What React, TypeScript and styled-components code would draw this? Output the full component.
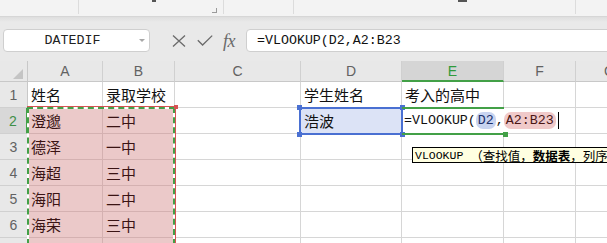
import React from "react";
import styled, { createGlobalStyle } from "styled-components";

const GlobalStyle = createGlobalStyle`
  html, body {
    margin: 0;
    padding: 0;
    background: #fff;
    overflow: hidden;
  }
  body {
    font-family: "Noto Sans CJK SC", "Noto Sans", sans-serif;
  }
`;

const GREEN = "#43a047";
const MONO = `"Liberation Mono", "DejaVu Sans Mono", monospace`;
const CJK = `"Noto Sans CJK SC", "Noto Sans", sans-serif`;

const Page = styled.div`
  width: 607px;
  height: 243px;
  overflow: hidden;
  display: flex;
  flex-direction: column;
`;

/* ---------- ribbon remnant ---------- */
const Ribbon = styled.div`
  height: 17px;
  flex: none;
  display: flex;
  background: #f3f3f3;
  border-bottom: 1px solid #d6d6d6;
  box-sizing: border-box;
`;

const RibbonGroup = styled.div<{ $w?: number }>`
  display: flex;
  align-items: flex-start;
  width: ${(p) => (p.$w ? `${p.$w}px` : "auto")};
  flex: ${(p) => (p.$w ? "none" : "1")};
  height: 14px;
  box-sizing: border-box;
  border-right: ${(p) => (p.$w ? "1px solid #dcdcdc" : "none")};
`;

const RibbonTick = styled.span<{ $left: number; $w: number }>`
  margin-left: ${(p) => p.$left}px;
  width: ${(p) => p.$w}px;
  height: 2px;
  background: #555;
`;

const Launcher = styled.span<{ $left: number }>`
  align-self: flex-end;
  margin-left: ${(p) => p.$left}px;
  margin-bottom: 1px;
  width: 4px;
  height: 4px;
  border-right: 1px solid #9a9a9a;
  border-bottom: 1px solid #9a9a9a;
`;

/* ---------- formula bar ---------- */
const FormulaArea = styled.div`
  height: 44px;
  flex: none;
  box-sizing: border-box;
  background: linear-gradient(#dedede, #e9e9e9 5px, #e9e9e9);
  padding: 12px 0 9px 3px;
  display: flex;
  align-items: stretch;
`;

const NameBox = styled.div`
  width: 147px;
  flex: none;
  box-sizing: border-box;
  background: #fff;
  border: 1px solid #cfcfcf;
  border-radius: 4px;
  display: flex;
  align-items: center;
  font-family: ${MONO};
  font-size: 13.3px;
  color: #222;
`;

const NameText = styled.span`
  flex: 1;
  text-align: center;
  padding-left: 2px;
`;

const DropArrow = styled.span`
  width: 0;
  height: 0;
  border-left: 3px solid transparent;
  border-right: 3px solid transparent;
  border-top: 3px solid #a8a8a8;
  margin-right: 4px;
`;

const Tools = styled.div`
  display: flex;
  align-items: center;
  gap: 11px;
  margin-left: 22px;
  color: #6a6a6a;
`;

const Fx = styled.span`
  font-family: "Liberation Serif", serif;
  font-style: italic;
  font-size: 18px;
  color: #6a6a6a;
  line-height: 1;
  margin-left: -1px;
  letter-spacing: -0.5px;
`;

const FormulaInput = styled.div`
  flex: 1;
  margin-left: 11px;
  margin-right: -8px;
  box-sizing: border-box;
  background: #fff;
  border: 1px solid #cfcfcf;
  border-radius: 4px;
  padding-left: 10px;
  display: flex;
  align-items: center;
  font-family: ${MONO};
  font-size: 13.3px;
  color: #111;
`;

/* ---------- sheet ---------- */
const Grid = styled.div`
  position: relative;
  display: grid;
  grid-template-columns: 28px 75px 72px 126px 101px 102px 72px 68px;
  grid-template-rows: 21px repeat(7, 26px);
`;

const Corner = styled.div`
  box-sizing: border-box;
  background: #e8e8e8;
  border-right: 1px solid #c8c8c8;
  border-bottom: 1px solid #c8c8c8;
  display: flex;
  justify-content: flex-end;
  align-items: flex-end;
  padding: 0 4px 2px 0;
`;

const CornerMark = styled.span`
  width: 0;
  height: 0;
  border-left: 10px solid transparent;
  border-bottom: 10px solid #c4c4c4;
`;

const ColHeader = styled.div<{ $active?: boolean }>`
  box-sizing: border-box;
  display: flex;
  align-items: center;
  justify-content: center;
  font-family: "Liberation Sans", Arial, sans-serif;
  font-size: 14px;
  color: ${(p) => (p.$active ? "#2f9a3a" : "#626262")};
  background: ${(p) => (p.$active ? "#d5d5d5" : "#e8e8e8")};
  border-right: 1px solid #d0d0d0;
  border-bottom: ${(p) => (p.$active ? `2px solid ${GREEN}` : "1px solid #c8c8c8")};
`;

const RowHeader = styled.div<{ $active?: boolean }>`
  box-sizing: border-box;
  display: flex;
  align-items: center;
  justify-content: center;
  font-family: "Liberation Sans", Arial, sans-serif;
  font-size: 14px;
  color: ${(p) => (p.$active ? "#3f8f48" : "#626262")};
  background: ${(p) => (p.$active ? "#d8d8d8" : "#e8e8e8")};
  border-right: ${(p) => (p.$active ? `2px solid ${GREEN}` : "1px solid #c8c8c8")};
  border-bottom: 1px solid #d0d0d0;
`;

type Fill = "pink" | "blue" | undefined;

const lineColor = (f: Fill) => (f === "pink" ? "#d4b1b1" : "#d6d6d6");

const Cell = styled.div<{ $fill?: Fill; $overflow?: boolean }>`
  box-sizing: border-box;
  display: flex;
  align-items: center;
  padding-left: ${(p) => (p.$overflow ? "2px" : "3px")};
  white-space: nowrap;
  font-family: ${CJK};
  font-size: 15px;
  color: ${(p) => (p.$fill === "pink" ? "#3a1414" : "#111")};
  background: ${(p) =>
    p.$fill === "pink" ? "#ebc9c9" : p.$fill === "blue" ? "#dce3f6" : "#fff"};
  border-bottom: 1px solid ${(p) => lineColor(p.$fill)};
  border-right: ${(p) => (p.$overflow ? "none" : `1px solid ${lineColor(p.$fill)}`)};
  position: ${(p) => (p.$overflow ? "relative" : "static")};
  z-index: ${(p) => (p.$overflow ? 1 : "auto")};
`;

const CellFormula = styled.span`
  display: flex;
  align-items: center;
  font-family: ${MONO};
  font-size: 13.3px;
  color: #111;
`;

const RefPill = styled.span<{ $tone: "blue" | "red" }>`
  padding: 1px 2px;
  border-radius: 7px;
  background: ${(p) => (p.$tone === "blue" ? "#c8d4f0" : "#f0c9c9")};
  color: ${(p) => (p.$tone === "blue" ? "#1c2f6a" : "#4a1616")};
`;

const Caret = styled.span`
  width: 1px;
  height: 17px;
  margin-left: 2px;
  background: #000;
`;

/* ---------- overlays ---------- */
const Marquee = styled.div`
  position: absolute;
  left: 27px;
  top: 45px;
  width: 149px;
  height: 200px;
  box-sizing: border-box;
  border-top: 1px solid #d65353;
  border-right: 1px solid #d65353;
  pointer-events: none;
`;

const Ants = styled.div`
  position: absolute;
  inset: 0 0 0 0;
  border: 2px solid #fff;
  &::before {
    content: "";
    position: absolute;
    inset: -2px;
    border: 2px dashed ${GREEN};
  }
`;

const RedHandle = styled.span`
  position: absolute;
  right: -3px;
  top: -2px;
  width: 4px;
  height: 4px;
  background: #d65353;
`;

const RefBox = styled.div`
  position: absolute;
  left: 299px;
  top: 46px;
  width: 104px;
  height: 28px;
  box-sizing: border-box;
  border: 2px solid #4a70d2;
  pointer-events: none;
  z-index: 2;
`;

const Handle = styled.span<{ $x: "l" | "r"; $y: "t" | "b"; $color: string }>`
  position: absolute;
  width: 5px;
  height: 5px;
  background: ${(p) => p.$color};
  ${(p) => (p.$x === "l" ? "left: -4px;" : "right: -4px;")}
  ${(p) => (p.$y === "t" ? "top: -4px;" : "bottom: -4px;")}
`;

const ActiveCell = styled.div`
  position: absolute;
  left: 402px;
  top: 46px;
  width: 102px;
  height: 28px;
  box-sizing: border-box;
  border-top: 2px solid ${GREEN};
  border-bottom: 2px solid ${GREEN};
  pointer-events: none;
  z-index: 2;
`;

const Tooltip = styled.div`
  position: absolute;
  left: 412px;
  top: 86px;
  height: 16px;
  box-sizing: border-box;
  padding: 0 2px;
  display: flex;
  align-items: center;
  white-space: nowrap;
  background: #ffffe1;
  border: 1px solid #000;
  font-family: ${CJK};
  font-size: 12.5px;
  color: #000;
  z-index: 3;
`;

const TipFn = styled.span`
  font-family: ${MONO};
  font-size: 11.5px;
`;

const TipBold = styled.b`
  font-weight: 700;
`;

/* ---------- data ---------- */
type CellData = { t?: string; fill?: Fill; formula?: boolean };

const COLS = ["A", "B", "C", "D", "E", "F", "G"];

const ROWS: CellData[][] = [
  [{ t: "姓名" }, { t: "录取学校" }, {}, { t: "学生姓名" }, { t: "考入的高中" }, {}, {}],
  [{ t: "澄邈", fill: "pink" }, { t: "二中", fill: "pink" }, {}, { t: "浩波", fill: "blue" }, { formula: true }, {}, {}],
  [{ t: "德泽", fill: "pink" }, { t: "一中", fill: "pink" }, {}, {}, {}, {}, {}],
  [{ t: "海超", fill: "pink" }, { t: "三中", fill: "pink" }, {}, {}, {}, {}, {}],
  [{ t: "海阳", fill: "pink" }, { t: "二中", fill: "pink" }, {}, {}, {}, {}, {}],
  [{ t: "海荣", fill: "pink" }, { t: "三中", fill: "pink" }, {}, {}, {}, {}, {}],
  [{ fill: "pink" }, { fill: "pink" }, {}, {}, {}, {}, {}],
];

const XIcon = () => (
  <svg width="14" height="12" viewBox="0 0 14 12">
    <path d="M1 0.5 L13 11.5 M13 0.5 L1 11.5" stroke="currentColor" strokeWidth="1.3" fill="none" />
  </svg>
);

const CheckIcon = () => (
  <svg width="16" height="11" viewBox="0 0 16 11">
    <path d="M0.8 5.2 L5.6 10 L15.2 0.6" stroke="currentColor" strokeWidth="1.3" fill="none" />
  </svg>
);

const App = () => (
  <Page>
    <GlobalStyle />
    <Ribbon>
      <RibbonGroup $w={79} />
      <RibbonGroup $w={145}>
        <RibbonTick $left={73} $w={4} />
        <Launcher $left={56} />
      </RibbonGroup>
      <RibbonGroup $w={70} />
      <RibbonGroup $w={282}>
        <RibbonTick $left={164} $w={9} />
      </RibbonGroup>
      <RibbonGroup />
    </Ribbon>

    <FormulaArea>
      <NameBox>
        <NameText>DATEDIF</NameText>
        <DropArrow />
      </NameBox>
      <Tools>
        <XIcon />
        <CheckIcon />
        <Fx>fx</Fx>
      </Tools>
      <FormulaInput>=VLOOKUP(D2,A2:B23</FormulaInput>
    </FormulaArea>

    <Grid>
      <Corner>
        <CornerMark />
      </Corner>
      {COLS.map((c) => (
        <ColHeader key={c} $active={c === "E"}>
          {c}
        </ColHeader>
      ))}

      {ROWS.map((row, r) => (
        <React.Fragment key={r}>
          <RowHeader $active={r === 1}>{r + 1}</RowHeader>
          {row.map((cell, c) => (
            <Cell key={c} $fill={cell.fill} $overflow={cell.formula}>
              {cell.formula ? (
                <CellFormula>
                  =VLOOKUP(<RefPill $tone="blue">D2</RefPill>,
                  <RefPill $tone="red">A2:B23</RefPill>
                  <Caret />
                </CellFormula>
              ) : (
                cell.t
              )}
            </Cell>
          ))}
        </React.Fragment>
      ))}

      <Marquee>
        <Ants />
        <RedHandle />
      </Marquee>

      <RefBox>
        <Handle $x="l" $y="t" $color="#4a70d2" />
        <Handle $x="r" $y="t" $color="#4a70d2" />
        <Handle $x="l" $y="b" $color="#4a70d2" />
        <Handle $x="r" $y="b" $color="#4a70d2" />
      </RefBox>

      <ActiveCell>
        <Handle $x="r" $y="b" $color={GREEN} />
      </ActiveCell>

      <Tooltip>
        <TipFn>VLOOKUP&nbsp;</TipFn>（查找值，<TipBold>数据表</TipBold>，列序数，[匹配条件]）
      </Tooltip>
    </Grid>
  </Page>
);

export default App;
